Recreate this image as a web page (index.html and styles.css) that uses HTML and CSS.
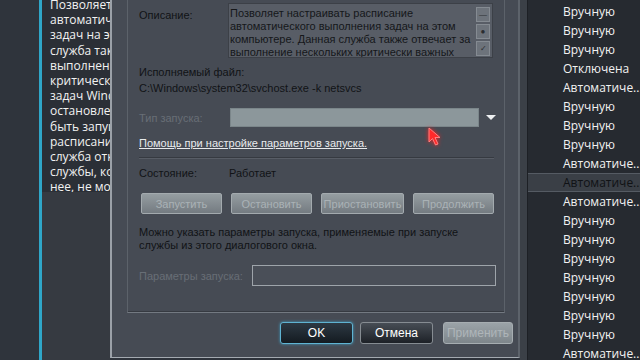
FILE: index.html
```html
<!DOCTYPE html>
<html lang="ru">
<head>
    <meta charset="UTF-8">
    <meta name="viewport" content="width=device-width, initial-scale=1.0">
    <title>Свойства службы</title>
    <link rel="stylesheet" href="styles.css">
</head>
<body>
    <div class="side"></div>
    <div class="accent"></div>

    <div class="info">
        <div class="info-text">
            <div>Позволяет настраивать</div>
            <div>автоматического</div>
            <div>задач на этом</div>
            <div>служба также</div>
            <div>выполнение</div>
            <div>критически важных</div>
            <div>задач Windows. Если</div>
            <div>остановлена или</div>
            <div>быть запущены по</div>
            <div>расписанию. Если</div>
            <div>служба отключена, все</div>
            <div>службы, которые</div>
            <div>нее, не могут быть</div>
        </div>
    </div>

    <div class="dialog">
        <div class="group">
            <div class="row desc-row">
                <span class="label">Описание:</span>
                <div class="desc-box">
                    <div class="desc-text">
                        <div>Позволяет настраивать расписание</div>
                        <div>автоматического выполнения задач на этом</div>
                        <div>компьютере. Данная служба также отвечает за</div>
                        <div>выполнение нескольких критически важных</div>
                    </div>
                    <div class="scroll">
                        <span class="sbtn">&#8212;</span>
                        <span class="sbtn">&#9679;</span>
                        <span class="sbtn">&#10003;</span>
                    </div>
                </div>
            </div>

            <div class="line exe-label">Исполняемый файл:</div>
            <div class="line">C:\Windows\system32\svchost.exe -k netsvcs</div>

            <div class="row type-row">
                <span class="label disabled">Тип запуска:</span>
                <div class="combo"></div>
                <span class="arrow"></span>
            </div>

            <div class="line link-line"><a class="link">Помощь при настройке параметров запуска.</a></div>

            <div class="separator"></div>

            <div class="row state-row">
                <span class="label">Состояние:</span>
                <span>Работает</span>
            </div>

            <div class="actions">
                <button class="btn">Запустить</button>
                <button class="btn">Остановить</button>
                <button class="btn">Приостановить</button>
                <button class="btn">Продолжить</button>
            </div>

            <p class="hint">Можно указать параметры запуска, применяемые при запуске<br>службы из этого диалогового окна.</p>

            <div class="row params-row">
                <span class="label disabled">Параметры запуска:</span>
                <div class="params-input"></div>
            </div>
        </div>

        <div class="footer">
            <button class="fbtn ok">OK</button>
            <button class="fbtn cancel">Отмена</button>
            <button class="fbtn apply">Применить</button>
        </div>

        <svg class="cursor" width="14" height="20" viewBox="0 0 14 20">
            <path d="M1 1 L1 15 L4.5 11.5 L7.5 18 L10 17 L7 10.5 L12 10.5 Z" fill="#ff2a2a" stroke="#ff8080" stroke-width="1"/>
        </svg>
    </div>

    <div class="strip"></div>

    <div class="list">
        <div class="item">Вручную</div>
        <div class="item">Вручную</div>
        <div class="item">Вручную</div>
        <div class="item">Отключена</div>
        <div class="item">Автоматиче...</div>
        <div class="item">Вручную</div>
        <div class="item">Вручную</div>
        <div class="item">Вручную</div>
        <div class="item">Автоматиче...</div>
        <div class="item selected">Автоматиче...</div>
        <div class="item">Автоматиче...</div>
        <div class="item">Вручную</div>
        <div class="item">Вручную</div>
        <div class="item">Вручную</div>
        <div class="item">Вручную</div>
        <div class="item">Вручную</div>
        <div class="item">Вручную</div>
        <div class="item">Вручную</div>
        <div class="item">Автоматиче...</div>
    </div>
</body>
</html>
```

FILE: styles.css
```css
body {
    margin: 0;
    width: 640px;
    height: 360px;
    overflow: hidden;
    display: flex;
    background-color: #2e333b;
    font-family: "Liberation Sans", Arial, sans-serif;
}
.side {
    width: 39px;
    background-color: #2f343c;
}
.accent {
    width: 3px;
    background-color: #2fa6c8;
}
.info {
    width: 68px;
    background-color: #363a41;
    overflow: hidden;
}
.info-text {
    height: 192px;
    padding: 0 0 0 8px;
    background-color: #2b2f36;
    color: #f2f2f2;
    font-family: "Open Sans", sans-serif;
    font-size: 12px;
    line-height: 15.2px;
    white-space: nowrap;
    overflow: hidden;
}
.info-text div:first-child {
    margin-top: -3px;
}

/* dialog */
.dialog {
    position: relative;
    width: 406px;
    height: 357px;
    background-color: #464b54;
    border-left: 2px solid #9ba1a8;
    border-right: 2px solid #5d636b;
    border-bottom: 1px solid #a4aab1;
    display: flex;
    flex-direction: column;
    font-size: 11px;
    color: #111316;
}
.group {
    margin-left: 15px;
    width: 378px;
    height: 313px;
    box-sizing: border-box;
    padding: 3px 0 0 11px;
    border-left: 1px solid #5c626a;
    border-right: 1px solid #5c626a;
    border-bottom: 1px solid #737981;
    box-shadow: inset 0 -1px 0 #363a41;
}
.row {
    display: flex;
    align-items: center;
}
.label {
    width: 89px;
    flex-shrink: 0;
}
.disabled {
    color: #686e76;
}
.desc-row {
    align-items: flex-start;
    height: 55px;
}
.desc-row .label {
    margin-top: 6px;
}
.desc-box {
    width: 263px;
    height: 53px;
    display: flex;
    background-color: #585d66;
    border: 1px solid #3c4047;
}
.desc-text {
    flex: 1;
    padding: 3px 0 0 1px;
    line-height: 13px;
    white-space: nowrap;
    overflow: hidden;
    color: #15171a;
}
.scroll {
    width: 14px;
    margin-right: 2px;
    padding-top: 3px;
    display: flex;
    flex-direction: column;
    gap: 2px;
}
.sbtn {
    height: 13px;
    background-color: #6d737b;
    border: 1px solid #858b92;
    font-size: 8px;
    line-height: 13px;
    text-align: center;
    color: #2a2d31;
}
.line {
    height: 16px;
    line-height: 16px;
    white-space: nowrap;
}
.exe-label {
    margin-top: 6px;
}
.type-row {
    margin-top: 12px;
    height: 19px;
}
.type-row .label {
    width: 91px;
}
.combo {
    width: 247px;
    height: 17px;
    background-color: #8c979b;
    border: 1px solid #7b868a;
}
.arrow {
    margin-left: 7px;
    width: 0;
    height: 0;
    border-left: 5px solid transparent;
    border-right: 5px solid transparent;
    border-top: 5px solid #eef0f2;
}
.link-line {
    margin-top: 8px;
}
.link {
    color: #e8eaec;
    text-decoration: underline;
}
.separator {
    margin-top: 6px;
    width: 355px;
    height: 1px;
    background-color: #363a41;
    border-bottom: 1px solid #585d66;
}
.state-row {
    margin-top: 6px;
    height: 16px;
}
.state-row .label {
    width: 90px;
}
.actions {
    margin-top: 12px;
    margin-left: 2px;
    display: flex;
    gap: 9px;
}
.btn {
    width: 81px;
    height: 21px;
    padding: 0;
    font-family: inherit;
    font-size: 11px;
    color: #aab2b6;
    background: linear-gradient(#959da1, #747b81);
    border: 1px solid #a3aaae;
    border-radius: 2px;
}
.actions .btn:nth-child(3) {
    width: 83px;
}
.hint {
    margin: 12px 0 0;
    line-height: 13px;
}
.params-row {
    margin-top: 13px;
    height: 21px;
}
.params-row .label {
    width: 113px;
}
.params-input {
    width: 242px;
    height: 19px;
    background-color: #4a4f58;
    border: 1px solid #9ea4aa;
}
.footer {
    margin-top: 9px;
    padding-right: 5px;
    display: flex;
    justify-content: flex-end;
}
.fbtn {
    width: 73px;
    height: 22px;
    padding: 0;
    font-family: inherit;
    font-size: 12px;
    border-radius: 3px;
}
.ok {
    margin-right: 7px;
    color: #fff;
    background: linear-gradient(#2d3943, #141b21);
    border: 1px solid #5fb3d2;
    box-shadow: 0 0 3px #3f9cc0;
}
.cancel {
    margin-right: 10px;
    color: #fff;
    background: linear-gradient(#474d55, #1d2127);
    border: 1px solid #868c92;
}
.apply {
    width: 70px;
    color: #aeb5b9;
    background: linear-gradient(#9ba3a8, #7e868b);
    border: 1px solid #a6adb1;
}
.cursor {
    position: absolute;
    left: 316px;
    top: 127px;
    filter: drop-shadow(0 0 2px #ff2020);
}

/* right list */
.strip {
    width: 7px;
    background-color: #3b4047;
    border-right: 1px solid #1d2025;
}
.list {
    flex: 1;
    padding-top: 2px;
    background-color: #262a30;
    font-family: "Open Sans", sans-serif;
    font-size: 12px;
    color: #f2f2f2;
    overflow: hidden;
}
.item {
    height: 19px;
    line-height: 19px;
    padding-left: 35px;
    white-space: nowrap;
}
.selected {
    height: 17px;
    line-height: 17px;
    background-color: #3a3f46;
    border-top: 1px solid #555b63;
    border-bottom: 1px solid #555b63;
    color: #101215;
}
```
